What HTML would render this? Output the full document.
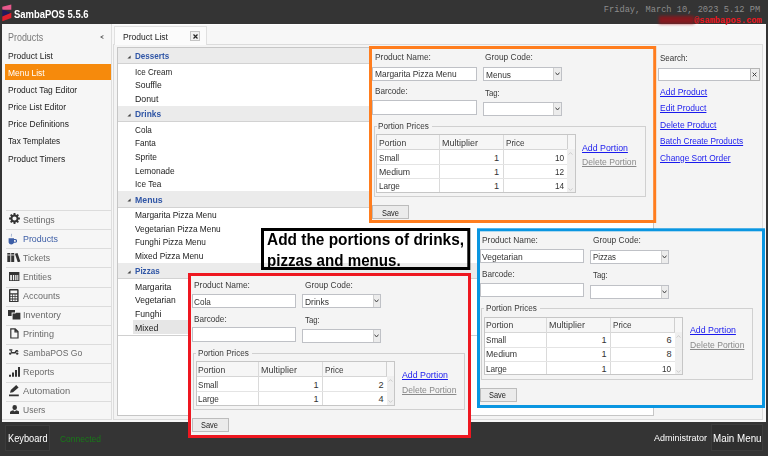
<!DOCTYPE html>
<html><head><meta charset="utf-8"><title>SambaPOS 5.5.6</title>
<style>
html,body{margin:0;padding:0;}
body{width:768px;height:456px;overflow:hidden;background:#343434;position:relative;font-family:'Liberation Sans', Arial, sans-serif;}
#app{position:absolute;left:0;top:0;width:768px;height:456px;overflow:hidden;z-index:0;}
#app div,#app span,#app svg{position:absolute;display:block;}
#app span{white-space:nowrap;}
</style></head><body><div id="app">
<div style="left:2px;top:24px;width:763.5px;height:398px;background:#f7f7f7;border-top:1px solid #fdfdfd;box-sizing:border-box;"></div>
<div style="left:2px;top:24px;width:110px;height:396px;background:#f6f6f6;border-right:1px solid #dedede;border-bottom:1px solid #dedede;box-sizing:border-box;"></div>
<svg style="left:2px;top:4.2px" width="10" height="17.6" viewBox="0 0 10 17" preserveAspectRatio="none"><polygon points="0.3,2.6 9.3,0.6 9.3,5.6 0.3,5.6" fill="#e8588c"/><polygon points="0.3,5.4 9,8.6 0.3,12.2" fill="#231a5c"/><polygon points="0.3,12 9.3,8.4 9.3,13.6 0.3,16.6" fill="#e0202c"/><polygon points="0.3,5.4 9.3,5.4 9.3,8.6 7,8.6" fill="#3b2a6e" opacity="0.0"/></svg>
<span id="t0" style="top:7.18px;font:bold 10.6px/14.8px 'Liberation Sans', Arial, sans-serif;color:#fff;left:13.50px;transform-origin:0 50%;transform:scaleX(0.8916);">SambaPOS 5.5.6</span>
<span id="t1" style="top:3.83px;font:normal 8.7px/12.2px 'Liberation Mono', 'DejaVu Sans Mono', monospace;color:#8c8c8c;left:603.80px;transform-origin:0 50%;">Friday, March 10, 2023 5.12 PM</span>
<div style="left:659px;top:16px;width:35px;height:8px;background:#a01018;filter:blur(1.6px);opacity:.75"></div>
<span id="t2" style="top:14.83px;font:bold 8.7px/12.2px 'Liberation Mono', 'DejaVu Sans Mono', monospace;color:#f0141e;left:694.00px;transform-origin:0 50%;">@sambapos.com</span>
<span id="t3" style="top:30.79px;font:normal 10px/14.0px 'Liberation Sans', Arial, sans-serif;color:#7a7a7a;left:7.75px;transform-origin:0 50%;transform:scaleX(0.8931);">Products</span>
<svg style="left:99.9px;top:35px" width="4" height="4" viewBox="0 0 4 4"><path d="M3.4,0 L0,2 L3.4,4 L3.4,3.1 L1.7,2 L3.4,0.9Z" fill="#555"/></svg>
<div style="left:5px;top:64px;width:106px;height:16px;background:#f68a0c;"></div>
<span id="t4" style="top:49.61px;font:normal 9.2px/12.9px 'Liberation Sans', Arial, sans-serif;color:#222;left:8.00px;transform-origin:0 50%;transform:scaleX(0.9259);">Product List</span>
<span id="t5" style="top:66.61px;font:normal 9.2px/12.9px 'Liberation Sans', Arial, sans-serif;color:#fff;left:8.00px;transform-origin:0 50%;transform:scaleX(0.9203);">Menu List</span>
<span id="t6" style="top:83.61px;font:normal 9.2px/12.9px 'Liberation Sans', Arial, sans-serif;color:#222;left:8.00px;transform-origin:0 50%;transform:scaleX(0.9171);">Product Tag Editor</span>
<span id="t7" style="top:100.61px;font:normal 9.2px/12.9px 'Liberation Sans', Arial, sans-serif;color:#222;left:8.00px;transform-origin:0 50%;transform:scaleX(0.9002);">Price List Editor</span>
<span id="t8" style="top:117.61px;font:normal 9.2px/12.9px 'Liberation Sans', Arial, sans-serif;color:#222;left:8.00px;transform-origin:0 50%;transform:scaleX(0.9176);">Price Definitions</span>
<span id="t9" style="top:134.61px;font:normal 9.2px/12.9px 'Liberation Sans', Arial, sans-serif;color:#222;left:8.00px;transform-origin:0 50%;transform:scaleX(0.8908);">Tax Templates</span>
<span id="t10" style="top:152.61px;font:normal 9.2px/12.9px 'Liberation Sans', Arial, sans-serif;color:#222;left:8.00px;transform-origin:0 50%;transform:scaleX(0.9254);">Product Timers</span>
<div style="left:6px;top:210.0px;width:105px;height:1px;background:#dcdcdc;"></div>
<span id="t11" style="top:213.00px;font:normal 9.8px/13.7px 'Liberation Sans', Arial, sans-serif;color:#6a6a6a;left:23.30px;transform-origin:0 50%;transform:scaleX(0.8962);">Settings</span>
<div style="left:6px;top:229.0px;width:105px;height:1px;background:#dcdcdc;"></div>
<span id="t12" style="top:232.00px;font:normal 9.8px/13.7px 'Liberation Sans', Arial, sans-serif;color:#3d5ea6;left:23.30px;transform-origin:0 50%;transform:scaleX(0.9045);">Products</span>
<div style="left:6px;top:248.0px;width:105px;height:1px;background:#dcdcdc;"></div>
<span id="t13" style="top:251.00px;font:normal 9.8px/13.7px 'Liberation Sans', Arial, sans-serif;color:#6a6a6a;left:23.30px;transform-origin:0 50%;transform:scaleX(0.8796);">Tickets</span>
<div style="left:6px;top:267.0px;width:105px;height:1px;background:#dcdcdc;"></div>
<span id="t14" style="top:270.00px;font:normal 9.8px/13.7px 'Liberation Sans', Arial, sans-serif;color:#6a6a6a;left:23.30px;transform-origin:0 50%;transform:scaleX(0.8861);">Entities</span>
<div style="left:6px;top:286.5px;width:105px;height:1px;background:#dcdcdc;"></div>
<span id="t15" style="top:289.00px;font:normal 9.8px/13.7px 'Liberation Sans', Arial, sans-serif;color:#6a6a6a;left:23.30px;transform-origin:0 50%;transform:scaleX(0.9173);">Accounts</span>
<div style="left:6px;top:305.5px;width:105px;height:1px;background:#dcdcdc;"></div>
<span id="t16" style="top:308.00px;font:normal 9.8px/13.7px 'Liberation Sans', Arial, sans-serif;color:#6a6a6a;left:23.30px;transform-origin:0 50%;transform:scaleX(0.9421);">Inventory</span>
<div style="left:6px;top:324.5px;width:105px;height:1px;background:#dcdcdc;"></div>
<span id="t17" style="top:327.00px;font:normal 9.8px/13.7px 'Liberation Sans', Arial, sans-serif;color:#6a6a6a;left:23.30px;transform-origin:0 50%;transform:scaleX(0.9326);">Printing</span>
<div style="left:6px;top:343.5px;width:105px;height:1px;background:#dcdcdc;"></div>
<span id="t18" style="top:346.00px;font:normal 9.8px/13.7px 'Liberation Sans', Arial, sans-serif;color:#6a6a6a;left:23.30px;transform-origin:0 50%;transform:scaleX(0.8771);">SambaPOS Go</span>
<div style="left:6px;top:362.5px;width:105px;height:1px;background:#dcdcdc;"></div>
<span id="t19" style="top:365.00px;font:normal 9.8px/13.7px 'Liberation Sans', Arial, sans-serif;color:#6a6a6a;left:23.30px;transform-origin:0 50%;transform:scaleX(0.9102);">Reports</span>
<div style="left:6px;top:381.5px;width:105px;height:1px;background:#dcdcdc;"></div>
<span id="t20" style="top:384.00px;font:normal 9.8px/13.7px 'Liberation Sans', Arial, sans-serif;color:#6a6a6a;left:23.30px;transform-origin:0 50%;transform:scaleX(0.9529);">Automation</span>
<div style="left:6px;top:400.5px;width:105px;height:1px;background:#dcdcdc;"></div>
<span id="t21" style="top:403.00px;font:normal 9.8px/13.7px 'Liberation Sans', Arial, sans-serif;color:#6a6a6a;left:23.30px;transform-origin:0 50%;transform:scaleX(0.8686);">Users</span>
<svg style="left:8.5px;top:213.2px" width="11" height="11" viewBox="0 0 11 11"><path fill-rule="evenodd" fill="#333" d="M10.92,4.55 L10.92,6.45 L9.49,6.46 L9.00,7.64 L10.00,8.66 L8.66,10.00 L7.64,9.00 L6.46,9.49 L6.45,10.92 L4.55,10.92 L4.54,9.49 L3.36,9.00 L2.34,10.00 L1.00,8.66 L2.00,7.64 L1.51,6.46 L0.08,6.45 L0.08,4.55 L1.51,4.54 L2.00,3.36 L1.00,2.34 L2.34,1.00 L3.36,2.00 L4.54,1.51 L4.55,0.08 L6.45,0.08 L6.46,1.51 L7.64,2.00 L8.66,1.00 L10.00,2.34 L9.00,3.36 L9.49,4.54Z M7.6,5.5 A2.1,2.1 0 1 0 3.4,5.5 A2.1,2.1 0 1 0 7.6,5.5Z"/></svg>
<svg style="left:8px;top:232.5px" width="9" height="12" viewBox="0 0 9 12"><path fill="#3d5ea6" d="M0.6,5.2 H6 V6 H7.2 A1.9,1.9 0 0 1 7.2,9.8 H6 A3,3 0 0 1 3.3,11.6 A3,3 0 0 1 0.6,9.4Z M6,7 V8.8 H7 A0.9,0.9 0 0 0 7,7Z"/><path fill="#3d5ea6" d="M3.2,0.5 C4.6,1.6 2.4,2.6 3.8,4.2 C2,3.4 3.6,2 3.2,0.5Z"/></svg>
<svg style="left:7px;top:252.8px" width="14" height="9.4" viewBox="0 0 14 9.4"><g fill="#333"><path d="M0.3,0 H3.3 V9.2 H0.3Z M4.2,0 H7.2 V9.2 H4.2Z"/><path d="M7.9,0.7 L10.5,0 L13.4,8.6 L10.8,9.3Z"/></g><g fill="#f6f6f6"><rect x="0.3" y="1.6" width="3" height="0.8"/><rect x="4.2" y="1.6" width="3" height="0.8"/></g></svg>
<svg style="left:9px;top:271.5px" width="10.6" height="9.6" viewBox="0 0 10.6 9.6"><path fill="#333" fill-rule="evenodd" d="M0,0 H10.4 V9.4 H0Z M1.2,3 V8.2 H2.9 V3Z M3.9,3 V8.2 H5.2 V3Z M6.2,3 V8.2 H7.5 V3Z M8.3,3 V8.2 H9.3 V3Z"/></svg>
<svg style="left:9px;top:288.8px" width="9.8" height="13.4" viewBox="0 0 9.8 13.4"><path fill="#333" fill-rule="evenodd" d="M1,0 H8.6 A1,1 0 0 1 9.6,1 V12.2 A1,1 0 0 1 8.6,13.2 H1 A1,1 0 0 1 0,12.2 V1 A1,1 0 0 1 1,0Z M1.4,1.5 V4.3 H8.2 V1.5Z M1.4,5.6 V7.2 H3.2 V5.6Z M3.9,5.6 V7.2 H5.7 V5.6Z M6.4,5.6 V7.2 H8.2 V5.6Z M1.4,8 V9.6 H3.2 V8Z M3.9,8 V9.6 H5.7 V8Z M6.4,8 V9.6 H8.2 V8Z M1.4,10.4 V12 H3.2 V10.4Z M3.9,10.4 V12 H5.7 V10.4Z M6.4,10.4 V12 H8.2 V10.4Z"/></svg>
<svg style="left:8px;top:310px" width="12.6" height="9.8" viewBox="0 0 12.6 9.8"><path fill="#333" d="M0,0 H7 V2.4 H3.6 V6 H0Z M4.6,3.4 H7.4 L8,2.8 H12.4 V9.6 H4.6Z"/></svg>
<svg style="left:9.8px;top:328.2px" width="9" height="11" viewBox="0 0 9 11"><path fill="none" stroke="#333" stroke-width="1.2" d="M0.8,0.8 H5.2 L8,3.6 V10 H0.8Z M5,0.9 V3.8 H7.9"/></svg>
<svg style="left:8px;top:348.6px" width="11" height="6" viewBox="0 0 11 6"><path fill="#333" d="M1.2,0.2 H4.4 V1.4 H3.4 L4.2,3 H6.6 L8,1 H9.6 L10.6,2.6 L9.6,3 L9,2.2 L7.6,4.4 H3.4 L2.4,1.4 H1.2Z"/><circle cx="2.2" cy="4.6" r="1.2" fill="#333"/><circle cx="9.2" cy="4.6" r="1.2" fill="#333"/></svg>
<svg style="left:8.5px;top:366.8px" width="11.4" height="10" viewBox="0 0 11.4 10"><path fill="#333" d="M0,7.8 H2 V9.8 H0Z M3,5.6 H5 V9.8 H3Z M6,3 H8 V9.8 H6Z M9,0 H11.2 V9.8 H9Z"/></svg>
<svg style="left:9.3px;top:385.4px" width="10" height="11.4" viewBox="0 0 10 11.4"><path fill="#333" d="M0,9.6 H9.8 V11.2 H0Z M1,7.8 L1.8,5 L7.2,0 L9.6,2.4 L4,7.2Z"/></svg>
<svg style="left:9.8px;top:404.8px" width="9.6" height="9.6" viewBox="0 0 9.6 9.6"><path fill="#333" d="M4.7,0 A2.3,2.5 0 0 1 4.7,5 A2.3,2.5 0 0 1 4.7,0Z M0,9.4 V7.4 C0,6 2,5.4 3.2,5.2 L4.7,6.4 L6.2,5.2 C7.6,5.4 9.4,6 9.4,7.4 V9.4Z"/></svg>
<div style="left:113px;top:44px;width:650px;height:376px;background:#f4f4f4;border:1px solid #dcdcdc;box-sizing:border-box;"></div>
<div style="left:114px;top:26px;width:92.5px;height:19px;background:#fbfbfb;border:1px solid #e0e0e0;box-sizing:border-box;border-bottom:none;"></div>
<span id="t22" style="top:30.61px;font:normal 9.2px/12.9px 'Liberation Sans', Arial, sans-serif;color:#222;left:122.75px;transform-origin:0 50%;transform:scaleX(0.9259);">Product List</span>
<div style="left:190px;top:31px;width:10px;height:10px;background:#f0f0f0;border:1px solid #c4c4c4;box-sizing:border-box;"></div>
<svg style="left:192.8px;top:34.4px" width="5" height="5" viewBox="0 0 5 5"><path d="M0.5,0.5 L4.5,4.5 M4.5,0.5 L0.5,4.5" stroke="#222" stroke-width="1.15"/></svg>
<div style="left:117px;top:47px;width:537px;height:368.5px;background:#fff;border:1px solid #c6c6c6;box-sizing:border-box;"></div>
<div style="left:118px;top:47.5px;width:535px;height:15.899999999999999px;background:#ebebeb;border-bottom:1px solid #d2d2d2;"></div>
<svg style="left:126.8px;top:54.5px" width="4" height="4" viewBox="0 0 4 4"><polygon points="3.6,0.4 3.6,3.6 0.4,3.6" fill="#444"/></svg>
<span id="t23" style="top:49.61px;font:bold 9.2px/12.9px 'Liberation Sans', Arial, sans-serif;color:#3056a6;left:134.50px;transform-origin:0 50%;transform:scaleX(0.8800);">Desserts</span>
<span id="t24" style="top:65.61px;font:normal 9.2px/12.9px 'Liberation Sans', Arial, sans-serif;color:#222;left:134.50px;transform-origin:0 50%;transform:scaleX(0.8768);">Ice Cream</span>
<span id="t25" style="top:78.61px;font:normal 9.2px/12.9px 'Liberation Sans', Arial, sans-serif;color:#222;left:134.50px;transform-origin:0 50%;transform:scaleX(0.9378);">Souffle</span>
<span id="t26" style="top:92.61px;font:normal 9.2px/12.9px 'Liberation Sans', Arial, sans-serif;color:#222;left:134.50px;transform-origin:0 50%;transform:scaleX(0.9547);">Donut</span>
<div style="left:118px;top:105.50000000000001px;width:535px;height:15.899999999999999px;background:#ebebeb;border-bottom:1px solid #d2d2d2;"></div>
<svg style="left:126.8px;top:112.50000000000001px" width="4" height="4" viewBox="0 0 4 4"><polygon points="3.6,0.4 3.6,3.6 0.4,3.6" fill="#444"/></svg>
<span id="t27" style="top:107.61px;font:bold 9.2px/12.9px 'Liberation Sans', Arial, sans-serif;color:#3056a6;left:134.50px;transform-origin:0 50%;transform:scaleX(0.9147);">Drinks</span>
<span id="t28" style="top:123.61px;font:normal 9.2px/12.9px 'Liberation Sans', Arial, sans-serif;color:#222;left:134.50px;transform-origin:0 50%;transform:scaleX(0.8897);">Cola</span>
<span id="t29" style="top:136.61px;font:normal 9.2px/12.9px 'Liberation Sans', Arial, sans-serif;color:#222;left:134.50px;transform-origin:0 50%;transform:scaleX(0.8902);">Fanta</span>
<span id="t30" style="top:150.61px;font:normal 9.2px/12.9px 'Liberation Sans', Arial, sans-serif;color:#222;left:134.50px;transform-origin:0 50%;transform:scaleX(0.9127);">Sprite</span>
<span id="t31" style="top:164.61px;font:normal 9.2px/12.9px 'Liberation Sans', Arial, sans-serif;color:#222;left:134.50px;transform-origin:0 50%;transform:scaleX(0.9136);">Lemonade</span>
<span id="t32" style="top:177.61px;font:normal 9.2px/12.9px 'Liberation Sans', Arial, sans-serif;color:#222;left:134.50px;transform-origin:0 50%;transform:scaleX(0.8965);">Ice Tea</span>
<div style="left:118px;top:190.89999999999995px;width:535px;height:15.899999999999999px;background:#ebebeb;border-bottom:1px solid #d2d2d2;"></div>
<svg style="left:126.8px;top:197.89999999999995px" width="4" height="4" viewBox="0 0 4 4"><polygon points="3.6,0.4 3.6,3.6 0.4,3.6" fill="#444"/></svg>
<span id="t33" style="top:193.61px;font:bold 9.2px/12.9px 'Liberation Sans', Arial, sans-serif;color:#3056a6;left:134.50px;transform-origin:0 50%;transform:scaleX(0.9506);">Menus</span>
<span id="t34" style="top:208.61px;font:normal 9.2px/12.9px 'Liberation Sans', Arial, sans-serif;color:#222;left:134.50px;transform-origin:0 50%;transform:scaleX(0.9134);">Margarita Pizza Menu</span>
<span id="t35" style="top:222.61px;font:normal 9.2px/12.9px 'Liberation Sans', Arial, sans-serif;color:#222;left:134.50px;transform-origin:0 50%;transform:scaleX(0.9066);">Vegetarian Pizza Menu</span>
<span id="t36" style="top:235.61px;font:normal 9.2px/12.9px 'Liberation Sans', Arial, sans-serif;color:#222;left:134.50px;transform-origin:0 50%;transform:scaleX(0.9016);">Funghi Pizza Menu</span>
<span id="t37" style="top:249.61px;font:normal 9.2px/12.9px 'Liberation Sans', Arial, sans-serif;color:#222;left:134.50px;transform-origin:0 50%;transform:scaleX(0.9115);">Mixed Pizza Menu</span>
<div style="left:118px;top:262.5999999999999px;width:535px;height:15.899999999999999px;background:#ebebeb;border-bottom:1px solid #d2d2d2;"></div>
<svg style="left:126.8px;top:269.5999999999999px" width="4" height="4" viewBox="0 0 4 4"><polygon points="3.6,0.4 3.6,3.6 0.4,3.6" fill="#444"/></svg>
<span id="t38" style="top:264.61px;font:bold 9.2px/12.9px 'Liberation Sans', Arial, sans-serif;color:#3056a6;left:134.50px;transform-origin:0 50%;transform:scaleX(0.8781);">Pizzas</span>
<span id="t39" style="top:280.61px;font:normal 9.2px/12.9px 'Liberation Sans', Arial, sans-serif;color:#222;left:134.50px;transform-origin:0 50%;transform:scaleX(0.9384);">Margarita</span>
<span id="t40" style="top:293.61px;font:normal 9.2px/12.9px 'Liberation Sans', Arial, sans-serif;color:#222;left:134.50px;transform-origin:0 50%;transform:scaleX(0.9245);">Vegetarian</span>
<span id="t41" style="top:307.61px;font:normal 9.2px/12.9px 'Liberation Sans', Arial, sans-serif;color:#222;left:134.50px;transform-origin:0 50%;transform:scaleX(0.9404);">Funghi</span>
<div style="left:132.5px;top:320.39999999999986px;width:200px;height:14.1px;background:#e6e6e6;"></div>
<span id="t42" style="top:321.61px;font:normal 9.2px/12.9px 'Liberation Sans', Arial, sans-serif;color:#222;left:134.50px;transform-origin:0 50%;transform:scaleX(0.9553);">Mixed</span>
<div style="left:118px;top:334.59999999999985px;width:535px;height:1px;background:#d0d0d0;"></div>
<span id="t43" style="top:51.61px;font:normal 9.2px/12.9px 'Liberation Sans', Arial, sans-serif;color:#333;left:660.00px;transform-origin:0 50%;transform:scaleX(0.8752);">Search:</span>
<div style="left:657.5px;top:67.5px;width:93px;height:13.5px;background:#fff;border:1px solid #bfc1c6;box-sizing:border-box;"></div>
<div style="left:750px;top:67.5px;width:9.5px;height:13.5px;background:#eee;border:1px solid #b5b5b5;box-sizing:border-box;"></div>
<svg style="left:752.4px;top:72px" width="5" height="5" viewBox="0 0 5 5"><path d="M0.6,0.6 L4.4,4.4 M4.4,0.6 L0.6,4.4" stroke="#444" stroke-width="1"/></svg>
<span id="t44" style="top:85.61px;font:normal 9.2px/12.9px 'Liberation Sans', Arial, sans-serif;color:#1a1aee;left:659.60px;transform-origin:0 50%;transform:scaleX(0.9336);text-decoration:underline;">Add Product</span>
<span id="t45" style="top:101.61px;font:normal 9.2px/12.9px 'Liberation Sans', Arial, sans-serif;color:#1a1aee;left:659.60px;transform-origin:0 50%;transform:scaleX(0.9275);text-decoration:underline;">Edit Product</span>
<span id="t46" style="top:118.61px;font:normal 9.2px/12.9px 'Liberation Sans', Arial, sans-serif;color:#1a1aee;left:659.60px;transform-origin:0 50%;transform:scaleX(0.9282);text-decoration:underline;">Delete Product</span>
<span id="t47" style="top:134.61px;font:normal 9.2px/12.9px 'Liberation Sans', Arial, sans-serif;color:#1a1aee;left:659.60px;transform-origin:0 50%;transform:scaleX(0.8992);text-decoration:underline;">Batch Create Products</span>
<span id="t48" style="top:151.61px;font:normal 9.2px/12.9px 'Liberation Sans', Arial, sans-serif;color:#1a1aee;left:659.60px;transform-origin:0 50%;transform:scaleX(0.9098);text-decoration:underline;">Change Sort Order</span>
<svg style="left:368px;top:45px" width="290" height="179"><rect x="2.50" y="2.50" width="284.20" height="174.00" fill="#f4f4f4" stroke="#ff7d1e" stroke-width="3"/></svg>
<span id="t49" style="top:50.61px;font:normal 9.2px/12.9px 'Liberation Sans', Arial, sans-serif;color:#3a3a3a;left:374.60px;transform-origin:0 50%;transform:scaleX(0.9125);">Product Name:</span>
<span id="t50" style="top:50.61px;font:normal 9.2px/12.9px 'Liberation Sans', Arial, sans-serif;color:#3a3a3a;left:485.00px;transform-origin:0 50%;transform:scaleX(0.9109);">Group Code:</span>
<div style="left:372px;top:66.5px;width:104.5px;height:14px;background:#fff;border:1px solid #bfc1c6;box-sizing:border-box;"></div>
<span id="t51" style="top:67.61px;font:normal 9.2px/12.9px 'Liberation Sans', Arial, sans-serif;color:#333;left:374.60px;transform-origin:0 50%;transform:scaleX(0.9134);">Margarita Pizza Menu</span>
<div style="left:482.5px;top:67px;width:79px;height:14px;background:#fff;border:1px solid #bfc1c6;box-sizing:border-box;"></div>
<div style="left:553px;top:68px;width:6.5px;height:12px;background:#ececec;border-left:1px solid #cfcfcf;"></div>
<svg style="left:554.6px;top:72px" width="5" height="4" viewBox="0 0 5 4"><path d="M0.5,0.6 L2.5,3 L4.5,0.6" fill="none" stroke="#444" stroke-width="1"/></svg>
<span id="t52" style="top:68.61px;font:normal 9.2px/12.9px 'Liberation Sans', Arial, sans-serif;color:#333;left:485.50px;transform-origin:0 50%;transform:scaleX(0.9036);">Menus</span>
<span id="t53" style="top:84.61px;font:normal 9.2px/12.9px 'Liberation Sans', Arial, sans-serif;color:#3a3a3a;left:374.60px;transform-origin:0 50%;transform:scaleX(0.8882);">Barcode:</span>
<span id="t54" style="top:86.61px;font:normal 9.2px/12.9px 'Liberation Sans', Arial, sans-serif;color:#3a3a3a;left:485.00px;transform-origin:0 50%;transform:scaleX(0.8443);">Tag:</span>
<div style="left:372px;top:100px;width:104.5px;height:14.5px;background:#fff;border:1px solid #bfc1c6;box-sizing:border-box;"></div>
<div style="left:482.5px;top:102px;width:79px;height:14px;background:#fff;border:1px solid #bfc1c6;box-sizing:border-box;"></div>
<div style="left:553px;top:103px;width:6.5px;height:12px;background:#ececec;border-left:1px solid #cfcfcf;"></div>
<svg style="left:554.6px;top:107px" width="5" height="4" viewBox="0 0 5 4"><path d="M0.5,0.6 L2.5,3 L4.5,0.6" fill="none" stroke="#444" stroke-width="1"/></svg>
<div style="left:373.5px;top:125.5px;width:272px;height:71.5px;border:1px solid #d0d0d0;box-sizing:border-box;"></div>
<div style="left:376.5px;top:120px;width:55.5px;height:10px;background:#f4f4f4;"></div>
<span id="t55" style="top:119.61px;font:normal 9.2px/12.9px 'Liberation Sans', Arial, sans-serif;color:#3a3a3a;left:378.20px;transform-origin:0 50%;transform:scaleX(0.8902);">Portion Prices</span>
<div style="left:376px;top:134.2px;width:199.5px;height:58.80000000000001px;background:#fff;border:1px solid #c6c6c6;box-sizing:border-box;"></div>
<div style="left:377px;top:135.2px;width:197.5px;height:14px;background:#f6f6f6;border-bottom:1px solid #d6d6d6;"></div>
<div style="left:567px;top:149.2px;width:7.5px;height:42.80000000000001px;background:#efefef;"></div>
<svg style="left:568.3px;top:152.2px" width="5" height="3" viewBox="0 0 5 3"><path d="M0.5,2.6 L2.5,0.6 L4.5,2.6" fill="none" stroke="#c4c4c4" stroke-width="0.8"/></svg>
<svg style="left:568.3px;top:187.5px" width="5" height="3" viewBox="0 0 5 3"><path d="M0.5,0.4 L2.5,2.4 L4.5,0.4" fill="none" stroke="#c4c4c4" stroke-width="0.8"/></svg>
<div style="left:438.5px;top:135.2px;width:1px;height:56.80000000000001px;background:#dadada;"></div>
<div style="left:502.5px;top:135.2px;width:1px;height:56.80000000000001px;background:#dadada;"></div>
<div style="left:566.5px;top:135.2px;width:1px;height:14px;background:#cfcfcf;"></div>
<span id="t56" style="top:136.61px;font:normal 9.2px/12.9px 'Liberation Sans', Arial, sans-serif;color:#3a3a3a;left:378.60px;transform-origin:0 50%;transform:scaleX(0.9329);">Portion</span>
<span id="t57" style="top:136.61px;font:normal 9.2px/12.9px 'Liberation Sans', Arial, sans-serif;color:#3a3a3a;left:441.60px;transform-origin:0 50%;transform:scaleX(0.9770);">Multiplier</span>
<span id="t58" style="top:136.61px;font:normal 9.2px/12.9px 'Liberation Sans', Arial, sans-serif;color:#3a3a3a;left:505.60px;transform-origin:0 50%;transform:scaleX(0.8798);">Price</span>
<span id="t59" style="top:151.61px;font:normal 9.2px/12.9px 'Liberation Sans', Arial, sans-serif;color:#333;left:378.60px;transform-origin:0 50%;transform:scaleX(0.8776);">Small</span>
<span id="t60" style="top:151.61px;font:normal 9.2px/12.9px 'Liberation Sans', Arial, sans-serif;color:#333;right:269.00px;transform-origin:100% 50%;">1</span>
<span id="t61" style="top:151.61px;font:normal 9.2px/12.9px 'Liberation Sans', Arial, sans-serif;color:#333;right:204.00px;transform-origin:100% 50%;transform:scaleX(0.9000);">10</span>
<div style="left:377px;top:164.0px;width:190px;height:1px;background:#e4e4e4;"></div>
<span id="t62" style="top:165.61px;font:normal 9.2px/12.9px 'Liberation Sans', Arial, sans-serif;color:#333;left:378.60px;transform-origin:0 50%;transform:scaleX(0.9536);">Medium</span>
<span id="t63" style="top:165.61px;font:normal 9.2px/12.9px 'Liberation Sans', Arial, sans-serif;color:#333;right:269.00px;transform-origin:100% 50%;">1</span>
<span id="t64" style="top:165.61px;font:normal 9.2px/12.9px 'Liberation Sans', Arial, sans-serif;color:#333;right:204.00px;transform-origin:100% 50%;transform:scaleX(0.9000);">12</span>
<div style="left:377px;top:178.4px;width:190px;height:1px;background:#e4e4e4;"></div>
<span id="t65" style="top:179.61px;font:normal 9.2px/12.9px 'Liberation Sans', Arial, sans-serif;color:#333;left:378.60px;transform-origin:0 50%;transform:scaleX(0.8902);">Large</span>
<span id="t66" style="top:179.61px;font:normal 9.2px/12.9px 'Liberation Sans', Arial, sans-serif;color:#333;right:269.00px;transform-origin:100% 50%;">1</span>
<span id="t67" style="top:179.61px;font:normal 9.2px/12.9px 'Liberation Sans', Arial, sans-serif;color:#333;right:204.00px;transform-origin:100% 50%;transform:scaleX(0.9000);">14</span>
<span id="t68" style="top:141.61px;font:normal 9.2px/12.9px 'Liberation Sans', Arial, sans-serif;color:#1a1aee;left:582.00px;transform-origin:0 50%;transform:scaleX(0.9564);text-decoration:underline;">Add Portion</span>
<span id="t69" style="top:155.61px;font:normal 9.2px/12.9px 'Liberation Sans', Arial, sans-serif;color:#8a8a8a;left:582.00px;transform-origin:0 50%;transform:scaleX(0.9345);text-decoration:underline;">Delete Portion</span>
<div style="left:372.2px;top:205.0px;width:37.3px;height:14px;background:#ebebeb;border:1px solid #bcbcbc;box-sizing:border-box;"></div>
<span id="t70" style="top:206.61px;font:normal 9.2px/12.9px 'Liberation Sans', Arial, sans-serif;color:#222;left:381.50px;transform-origin:0 50%;transform:scaleX(0.8075);">Save</span>
<div style="left:0px;top:422px;width:768px;height:34px;background:#343434;"></div>
<div style="left:0px;top:0px;width:768px;height:24px;background:#343434;z-index:-1;"></div>
<div style="left:5px;top:425px;width:44.5px;height:25.5px;background:#2f2f2f;border:1px solid #3c3c3c;box-sizing:border-box;"></div>
<span id="t71" style="top:431.18px;font:normal 10.6px/14.8px 'Liberation Sans', Arial, sans-serif;color:#fff;left:7.50px;transform-origin:0 50%;transform:scaleX(0.8721);">Keyboard</span>
<span id="t72" style="top:432.61px;font:normal 9.2px/12.9px 'Liberation Sans', Arial, sans-serif;color:#187a18;left:60.00px;transform-origin:0 50%;transform:scaleX(0.9205);">Connected</span>
<span id="t73" style="top:431.61px;font:normal 9.2px/12.9px 'Liberation Sans', Arial, sans-serif;color:#fff;left:654.00px;transform-origin:0 50%;transform:scaleX(0.9777);">Administrator</span>
<div style="left:710.5px;top:424px;width:52px;height:26.5px;background:#2f2f2f;border:1px solid #3c3c3c;box-sizing:border-box;"></div>
<span id="t74" style="top:431.18px;font:normal 10.6px/14.8px 'Liberation Sans', Arial, sans-serif;color:#fff;left:713.00px;transform-origin:0 50%;transform:scaleX(0.9266);">Main Menu</span>
<svg style="left:260px;top:227px" width="212" height="44"><rect x="2.50" y="2.50" width="206.30" height="39.00" fill="none" stroke="#000" stroke-width="3"/></svg>
<span id="t75" style="top:228.20px;font:bold 16.3px/22.8px 'Liberation Sans', Arial, sans-serif;color:#000;left:267.00px;transform-origin:0 50%;transform:scaleX(0.9470);">Add the portions of drinks,</span>
<span id="t76" style="top:249.20px;font:bold 16.3px/22.8px 'Liberation Sans', Arial, sans-serif;color:#000;left:267.00px;transform-origin:0 50%;transform:scaleX(0.9294);">pizzas and menus.</span>
<svg style="left:476px;top:227px" width="290" height="182"><rect x="2.50" y="2.80" width="285.00" height="176.70" fill="#f4f4f4" stroke="#0a96e1" stroke-width="3"/></svg>
<span id="t77" style="top:233.61px;font:normal 9.2px/12.9px 'Liberation Sans', Arial, sans-serif;color:#3a3a3a;left:482.10px;transform-origin:0 50%;transform:scaleX(0.9125);">Product Name:</span>
<span id="t78" style="top:233.61px;font:normal 9.2px/12.9px 'Liberation Sans', Arial, sans-serif;color:#3a3a3a;left:592.50px;transform-origin:0 50%;transform:scaleX(0.9109);">Group Code:</span>
<div style="left:479.5px;top:249.0px;width:104.5px;height:14px;background:#fff;border:1px solid #bfc1c6;box-sizing:border-box;"></div>
<span id="t79" style="top:250.61px;font:normal 9.2px/12.9px 'Liberation Sans', Arial, sans-serif;color:#333;left:482.10px;transform-origin:0 50%;transform:scaleX(0.9245);">Vegetarian</span>
<div style="left:590.0px;top:249.5px;width:79px;height:14px;background:#fff;border:1px solid #bfc1c6;box-sizing:border-box;"></div>
<div style="left:660.5px;top:250.5px;width:6.5px;height:12px;background:#ececec;border-left:1px solid #cfcfcf;"></div>
<svg style="left:662.1px;top:254.5px" width="5" height="4" viewBox="0 0 5 4"><path d="M0.5,0.6 L2.5,3 L4.5,0.6" fill="none" stroke="#444" stroke-width="1"/></svg>
<span id="t80" style="top:250.61px;font:normal 9.2px/12.9px 'Liberation Sans', Arial, sans-serif;color:#333;left:593.00px;transform-origin:0 50%;transform:scaleX(0.8469);">Pizzas</span>
<span id="t81" style="top:267.61px;font:normal 9.2px/12.9px 'Liberation Sans', Arial, sans-serif;color:#3a3a3a;left:482.10px;transform-origin:0 50%;transform:scaleX(0.8882);">Barcode:</span>
<span id="t82" style="top:268.61px;font:normal 9.2px/12.9px 'Liberation Sans', Arial, sans-serif;color:#3a3a3a;left:592.50px;transform-origin:0 50%;transform:scaleX(0.8443);">Tag:</span>
<div style="left:479.5px;top:282.5px;width:104.5px;height:14.5px;background:#fff;border:1px solid #bfc1c6;box-sizing:border-box;"></div>
<div style="left:590.0px;top:284.5px;width:79px;height:14px;background:#fff;border:1px solid #bfc1c6;box-sizing:border-box;"></div>
<div style="left:660.5px;top:285.5px;width:6.5px;height:12px;background:#ececec;border-left:1px solid #cfcfcf;"></div>
<svg style="left:662.1px;top:289.5px" width="5" height="4" viewBox="0 0 5 4"><path d="M0.5,0.6 L2.5,3 L4.5,0.6" fill="none" stroke="#444" stroke-width="1"/></svg>
<div style="left:481.0px;top:308.0px;width:272px;height:71.49999999999994px;border:1px solid #d0d0d0;box-sizing:border-box;"></div>
<div style="left:484.0px;top:302.5px;width:55.5px;height:10px;background:#f4f4f4;"></div>
<span id="t83" style="top:301.61px;font:normal 9.2px/12.9px 'Liberation Sans', Arial, sans-serif;color:#3a3a3a;left:485.70px;transform-origin:0 50%;transform:scaleX(0.8902);">Portion Prices</span>
<div style="left:483.5px;top:316.7px;width:199.5px;height:58.799999999999955px;background:#fff;border:1px solid #c6c6c6;box-sizing:border-box;"></div>
<div style="left:484.5px;top:317.7px;width:197.5px;height:14px;background:#f6f6f6;border-bottom:1px solid #d6d6d6;"></div>
<div style="left:674.5px;top:331.7px;width:7.5px;height:42.799999999999955px;background:#efefef;"></div>
<svg style="left:675.8px;top:334.7px" width="5" height="3" viewBox="0 0 5 3"><path d="M0.5,2.6 L2.5,0.6 L4.5,2.6" fill="none" stroke="#c4c4c4" stroke-width="0.8"/></svg>
<svg style="left:675.8px;top:369.99999999999994px" width="5" height="3" viewBox="0 0 5 3"><path d="M0.5,0.4 L2.5,2.4 L4.5,0.4" fill="none" stroke="#c4c4c4" stroke-width="0.8"/></svg>
<div style="left:546.0px;top:317.7px;width:1px;height:56.799999999999955px;background:#dadada;"></div>
<div style="left:610.0px;top:317.7px;width:1px;height:56.799999999999955px;background:#dadada;"></div>
<div style="left:674.0px;top:317.7px;width:1px;height:14px;background:#cfcfcf;"></div>
<span id="t84" style="top:318.61px;font:normal 9.2px/12.9px 'Liberation Sans', Arial, sans-serif;color:#3a3a3a;left:486.10px;transform-origin:0 50%;transform:scaleX(0.9329);">Portion</span>
<span id="t85" style="top:318.61px;font:normal 9.2px/12.9px 'Liberation Sans', Arial, sans-serif;color:#3a3a3a;left:549.10px;transform-origin:0 50%;transform:scaleX(0.9770);">Multiplier</span>
<span id="t86" style="top:318.61px;font:normal 9.2px/12.9px 'Liberation Sans', Arial, sans-serif;color:#3a3a3a;left:613.10px;transform-origin:0 50%;transform:scaleX(0.8798);">Price</span>
<span id="t87" style="top:333.61px;font:normal 9.2px/12.9px 'Liberation Sans', Arial, sans-serif;color:#333;left:486.10px;transform-origin:0 50%;transform:scaleX(0.8776);">Small</span>
<span id="t88" style="top:333.61px;font:normal 9.2px/12.9px 'Liberation Sans', Arial, sans-serif;color:#333;right:161.50px;transform-origin:100% 50%;">1</span>
<span id="t89" style="top:333.61px;font:normal 9.2px/12.9px 'Liberation Sans', Arial, sans-serif;color:#333;right:96.50px;transform-origin:100% 50%;">6</span>
<div style="left:484.5px;top:346.49999999999994px;width:190px;height:1px;background:#e4e4e4;"></div>
<span id="t90" style="top:347.61px;font:normal 9.2px/12.9px 'Liberation Sans', Arial, sans-serif;color:#333;left:486.10px;transform-origin:0 50%;transform:scaleX(0.9536);">Medium</span>
<span id="t91" style="top:347.61px;font:normal 9.2px/12.9px 'Liberation Sans', Arial, sans-serif;color:#333;right:161.50px;transform-origin:100% 50%;">1</span>
<span id="t92" style="top:347.61px;font:normal 9.2px/12.9px 'Liberation Sans', Arial, sans-serif;color:#333;right:96.50px;transform-origin:100% 50%;">8</span>
<div style="left:484.5px;top:360.9px;width:190px;height:1px;background:#e4e4e4;"></div>
<span id="t93" style="top:362.61px;font:normal 9.2px/12.9px 'Liberation Sans', Arial, sans-serif;color:#333;left:486.10px;transform-origin:0 50%;transform:scaleX(0.8902);">Large</span>
<span id="t94" style="top:362.61px;font:normal 9.2px/12.9px 'Liberation Sans', Arial, sans-serif;color:#333;right:161.50px;transform-origin:100% 50%;">1</span>
<span id="t95" style="top:362.61px;font:normal 9.2px/12.9px 'Liberation Sans', Arial, sans-serif;color:#333;right:96.50px;transform-origin:100% 50%;transform:scaleX(0.9000);">10</span>
<span id="t96" style="top:323.61px;font:normal 9.2px/12.9px 'Liberation Sans', Arial, sans-serif;color:#1a1aee;left:689.50px;transform-origin:0 50%;transform:scaleX(0.9564);text-decoration:underline;">Add Portion</span>
<span id="t97" style="top:338.61px;font:normal 9.2px/12.9px 'Liberation Sans', Arial, sans-serif;color:#8a8a8a;left:689.50px;transform-origin:0 50%;transform:scaleX(0.9345);text-decoration:underline;">Delete Portion</span>
<div style="left:479.7px;top:387.49999999999994px;width:37.3px;height:14px;background:#ebebeb;border:1px solid #bcbcbc;box-sizing:border-box;"></div>
<span id="t98" style="top:388.61px;font:normal 9.2px/12.9px 'Liberation Sans', Arial, sans-serif;color:#222;left:489.00px;transform-origin:0 50%;transform:scaleX(0.8075);">Save</span>
<svg style="left:187px;top:272px" width="285" height="167"><rect x="2.50" y="2.50" width="280.00" height="162.00" fill="#f4f4f4" stroke="#ee1720" stroke-width="3"/></svg>
<span id="t99" style="top:278.61px;font:normal 9.2px/12.9px 'Liberation Sans', Arial, sans-serif;color:#3a3a3a;left:194.30px;transform-origin:0 50%;transform:scaleX(0.9125);">Product Name:</span>
<span id="t100" style="top:278.61px;font:normal 9.2px/12.9px 'Liberation Sans', Arial, sans-serif;color:#3a3a3a;left:304.70px;transform-origin:0 50%;transform:scaleX(0.9109);">Group Code:</span>
<div style="left:191.7px;top:293.7px;width:104.5px;height:14px;background:#fff;border:1px solid #bfc1c6;box-sizing:border-box;"></div>
<span id="t101" style="top:295.61px;font:normal 9.2px/12.9px 'Liberation Sans', Arial, sans-serif;color:#333;left:194.30px;transform-origin:0 50%;transform:scaleX(0.8897);">Cola</span>
<div style="left:302.2px;top:294.2px;width:79px;height:14px;background:#fff;border:1px solid #bfc1c6;box-sizing:border-box;"></div>
<div style="left:372.7px;top:295.2px;width:6.5px;height:12px;background:#ececec;border-left:1px solid #cfcfcf;"></div>
<svg style="left:374.29999999999995px;top:299.2px" width="5" height="4" viewBox="0 0 5 4"><path d="M0.5,0.6 L2.5,3 L4.5,0.6" fill="none" stroke="#444" stroke-width="1"/></svg>
<span id="t102" style="top:295.61px;font:normal 9.2px/12.9px 'Liberation Sans', Arial, sans-serif;color:#333;left:305.20px;transform-origin:0 50%;transform:scaleX(0.9183);">Drinks</span>
<span id="t103" style="top:312.61px;font:normal 9.2px/12.9px 'Liberation Sans', Arial, sans-serif;color:#3a3a3a;left:194.30px;transform-origin:0 50%;transform:scaleX(0.8882);">Barcode:</span>
<span id="t104" style="top:313.61px;font:normal 9.2px/12.9px 'Liberation Sans', Arial, sans-serif;color:#3a3a3a;left:304.70px;transform-origin:0 50%;transform:scaleX(0.8443);">Tag:</span>
<div style="left:191.7px;top:327.2px;width:104.5px;height:14.5px;background:#fff;border:1px solid #bfc1c6;box-sizing:border-box;"></div>
<div style="left:302.2px;top:329.2px;width:79px;height:14px;background:#fff;border:1px solid #bfc1c6;box-sizing:border-box;"></div>
<div style="left:372.7px;top:330.2px;width:6.5px;height:12px;background:#ececec;border-left:1px solid #cfcfcf;"></div>
<svg style="left:374.29999999999995px;top:334.2px" width="5" height="4" viewBox="0 0 5 4"><path d="M0.5,0.6 L2.5,3 L4.5,0.6" fill="none" stroke="#444" stroke-width="1"/></svg>
<div style="left:193.2px;top:352.7px;width:272px;height:57.099999999999966px;border:1px solid #d0d0d0;box-sizing:border-box;"></div>
<div style="left:196.2px;top:347.2px;width:55.5px;height:10px;background:#f4f4f4;"></div>
<span id="t105" style="top:346.61px;font:normal 9.2px/12.9px 'Liberation Sans', Arial, sans-serif;color:#3a3a3a;left:197.90px;transform-origin:0 50%;transform:scaleX(0.8902);">Portion Prices</span>
<div style="left:195.7px;top:361.4px;width:199.5px;height:44.39999999999998px;background:#fff;border:1px solid #c6c6c6;box-sizing:border-box;"></div>
<div style="left:196.7px;top:362.4px;width:197.5px;height:14px;background:#f6f6f6;border-bottom:1px solid #d6d6d6;"></div>
<div style="left:386.7px;top:376.4px;width:7.5px;height:28.399999999999977px;background:#efefef;"></div>
<svg style="left:388.0px;top:379.4px" width="5" height="3" viewBox="0 0 5 3"><path d="M0.5,2.6 L2.5,0.6 L4.5,2.6" fill="none" stroke="#c4c4c4" stroke-width="0.8"/></svg>
<svg style="left:388.0px;top:400.29999999999995px" width="5" height="3" viewBox="0 0 5 3"><path d="M0.5,0.4 L2.5,2.4 L4.5,0.4" fill="none" stroke="#c4c4c4" stroke-width="0.8"/></svg>
<div style="left:258.2px;top:362.4px;width:1px;height:42.39999999999998px;background:#dadada;"></div>
<div style="left:322.2px;top:362.4px;width:1px;height:42.39999999999998px;background:#dadada;"></div>
<div style="left:386.2px;top:362.4px;width:1px;height:14px;background:#cfcfcf;"></div>
<span id="t106" style="top:363.61px;font:normal 9.2px/12.9px 'Liberation Sans', Arial, sans-serif;color:#3a3a3a;left:198.30px;transform-origin:0 50%;transform:scaleX(0.9329);">Portion</span>
<span id="t107" style="top:363.61px;font:normal 9.2px/12.9px 'Liberation Sans', Arial, sans-serif;color:#3a3a3a;left:261.30px;transform-origin:0 50%;transform:scaleX(0.9770);">Multiplier</span>
<span id="t108" style="top:363.61px;font:normal 9.2px/12.9px 'Liberation Sans', Arial, sans-serif;color:#3a3a3a;left:325.30px;transform-origin:0 50%;transform:scaleX(0.8798);">Price</span>
<span id="t109" style="top:378.61px;font:normal 9.2px/12.9px 'Liberation Sans', Arial, sans-serif;color:#333;left:198.30px;transform-origin:0 50%;transform:scaleX(0.8776);">Small</span>
<span id="t110" style="top:378.61px;font:normal 9.2px/12.9px 'Liberation Sans', Arial, sans-serif;color:#333;right:449.30px;transform-origin:100% 50%;">1</span>
<span id="t111" style="top:378.61px;font:normal 9.2px/12.9px 'Liberation Sans', Arial, sans-serif;color:#333;right:384.30px;transform-origin:100% 50%;">2</span>
<div style="left:196.7px;top:391.19999999999993px;width:190px;height:1px;background:#e4e4e4;"></div>
<span id="t112" style="top:392.61px;font:normal 9.2px/12.9px 'Liberation Sans', Arial, sans-serif;color:#333;left:198.30px;transform-origin:0 50%;transform:scaleX(0.8902);">Large</span>
<span id="t113" style="top:392.61px;font:normal 9.2px/12.9px 'Liberation Sans', Arial, sans-serif;color:#333;right:449.30px;transform-origin:100% 50%;">1</span>
<span id="t114" style="top:392.61px;font:normal 9.2px/12.9px 'Liberation Sans', Arial, sans-serif;color:#333;right:384.30px;transform-origin:100% 50%;">4</span>
<span id="t115" style="top:368.61px;font:normal 9.2px/12.9px 'Liberation Sans', Arial, sans-serif;color:#1a1aee;left:401.70px;transform-origin:0 50%;transform:scaleX(0.9564);text-decoration:underline;">Add Portion</span>
<span id="t116" style="top:383.61px;font:normal 9.2px/12.9px 'Liberation Sans', Arial, sans-serif;color:#8a8a8a;left:401.70px;transform-origin:0 50%;transform:scaleX(0.9345);text-decoration:underline;">Delete Portion</span>
<div style="left:191.89999999999998px;top:417.79999999999995px;width:37.3px;height:14px;background:#ebebeb;border:1px solid #bcbcbc;box-sizing:border-box;"></div>
<span id="t117" style="top:418.61px;font:normal 9.2px/12.9px 'Liberation Sans', Arial, sans-serif;color:#222;left:201.20px;transform-origin:0 50%;transform:scaleX(0.8075);">Save</span>
</div></body></html>
